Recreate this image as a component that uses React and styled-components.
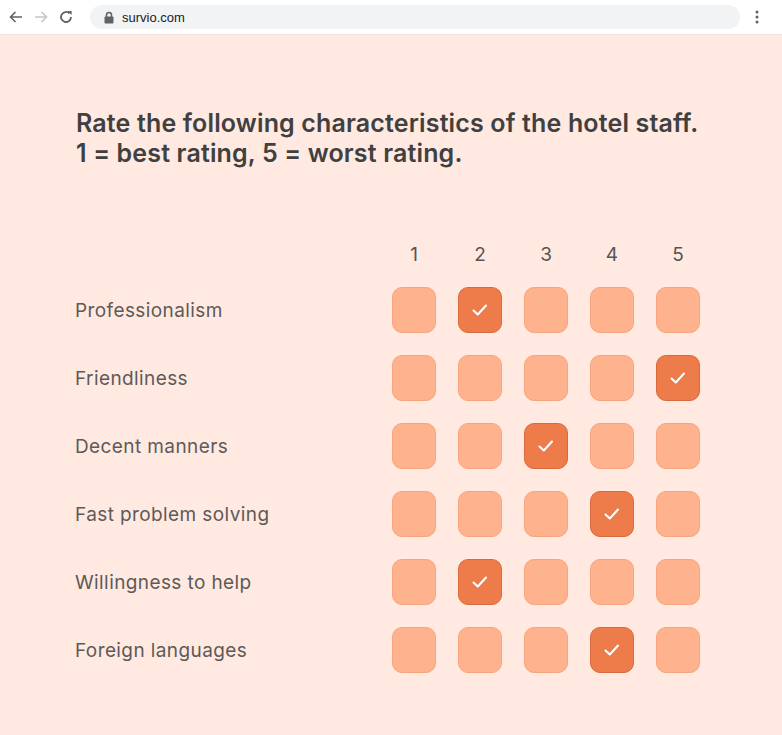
import React, { useState } from 'react';
import styled, { createGlobalStyle } from 'styled-components';

const GlobalStyle = createGlobalStyle`
  html, body {
    margin: 0;
    padding: 0;
    background: #ffe9e1;
    font-family: Inter, "Noto Sans", sans-serif;
  }
`;

const Browser = styled.div`
  height: 35px;
  background: #ffffff;
  display: flex;
  align-items: center;
  padding: 0 8px 0 8px;
  box-sizing: border-box;
  border-bottom: 1px solid #f3e3de;
`;

const NavIcons = styled.div`
  display: flex;
  align-items: center;
  gap: 9px;
  width: 82px;
`;

const AddressBar = styled.div`
  flex: 1;
  height: 24px;
  border-radius: 12px;
  background: #f1f3f4;
  display: flex;
  align-items: center;
  padding-left: 14px;
  gap: 8px;
  font-family: "Liberation Sans", Arial, sans-serif;
  font-size: 13px;
  color: #202124;
`;

const Menu = styled.div`
  width: 34px;
  display: flex;
  justify-content: center;
`;

const Page = styled.div`
  padding: 73px 0 40px 76px;
`;

const Title = styled.h1`
  margin: 0;
  font-size: 25px;
  line-height: 30px;
  font-weight: 600;
  color: #404040;
  letter-spacing: 0.15px;
`;

const Matrix = styled.div`
  margin-top: 75px;
  margin-left: -1px;
  display: grid;
  grid-template-columns: 295px repeat(5, 44px);
  column-gap: 22px;
  row-gap: 22px;
  align-items: center;
`;

const HeaderCell = styled.div`
  text-align: center;
  font-size: 19px;
  line-height: 24px;
  color: #555;
  margin-bottom: -2px;
`;

const Label = styled.div`
  font-size: 19px;
  color: #5e5a58;
  letter-spacing: 0.4px;
`;

const Box = styled.button`
  width: 44px;
  height: 46px;
  padding: 0;
  border-radius: 10px;
  box-sizing: border-box;
  border: 1px solid ${(p) => (p.$checked ? '#d96a3c' : '#f9a47c')};
  background: ${(p) => (p.$checked ? '#ee7c4b' : '#feb38e')};
  display: flex;
  align-items: center;
  justify-content: center;
  cursor: pointer;
`;

const rows = [
  ['Professionalism', 2],
  ['Friendliness', 5],
  ['Decent manners', 3],
  ['Fast problem solving', 4],
  ['Willingness to help', 2],
  ['Foreign languages', 4],
];

const Check = () => (
  <svg width="18" height="16" viewBox="0 0 18 16">
    <path d="M2.5 8.5 L6.8 12.5 L15 3.5" fill="none" stroke="#fff" strokeWidth="2" strokeLinecap="round" strokeLinejoin="round" />
  </svg>
);

export default function App() {
  const [values, setValues] = useState(rows.map((r) => r[1]));

  return (
    <>
      <GlobalStyle />
      <Browser>
        <NavIcons>
          <svg width="16" height="16" viewBox="0 0 16 16">
            <path d="M14 8 H2.5 M7.5 3 L2.5 8 L7.5 13" fill="none" stroke="#5f6368" strokeWidth="1.6" />
          </svg>
          <svg width="16" height="16" viewBox="0 0 16 16">
            <path d="M2 8 H13.5 M8.5 3 L13.5 8 L8.5 13" fill="none" stroke="#c4c7ca" strokeWidth="1.6" />
          </svg>
          <svg width="16" height="16" viewBox="0 0 16 16">
            <path d="M13 8 A5 5 0 1 1 11.5 4.4" fill="none" stroke="#5f6368" strokeWidth="1.8" />
            <path d="M9.5 2 H13.6 V6.1 Z" fill="#5f6368" />
          </svg>
        </NavIcons>
        <AddressBar>
          <svg width="10" height="13" viewBox="0 0 10 13">
            <path d="M2.5 6 V4 A2.5 2.5 0 0 1 7.5 4 V6" fill="none" stroke="#5f6368" strokeWidth="1.5" />
            <rect x="0.5" y="5.5" width="9" height="7" rx="1" fill="#5f6368" />
          </svg>
          survio.com
        </AddressBar>
        <Menu>
          <svg width="4" height="16" viewBox="0 0 4 16">
            <circle cx="2" cy="3" r="1.5" fill="#5f6368" />
            <circle cx="2" cy="8" r="1.5" fill="#5f6368" />
            <circle cx="2" cy="13" r="1.5" fill="#5f6368" />
          </svg>
        </Menu>
      </Browser>
      <Page>
        <Title>
          Rate the following characteristics of the hotel staff.
          <br />1 = best rating, 5 = worst rating.
        </Title>
        <Matrix>
          <div />
          {[1, 2, 3, 4, 5].map((n) => (
            <HeaderCell key={n}>{n}</HeaderCell>
          ))}
          {rows.map(([label], i) => (
            <React.Fragment key={label}>
              <Label>{label}</Label>
              {[1, 2, 3, 4, 5].map((n) => (
                <Box
                  key={n}
                  $checked={values[i] === n}
                  onClick={() => setValues(values.map((v, j) => (j === i ? n : v)))}
                >
                  {values[i] === n && <Check />}
                </Box>
              ))}
            </React.Fragment>
          ))}
        </Matrix>
      </Page>
    </>
  );
}
